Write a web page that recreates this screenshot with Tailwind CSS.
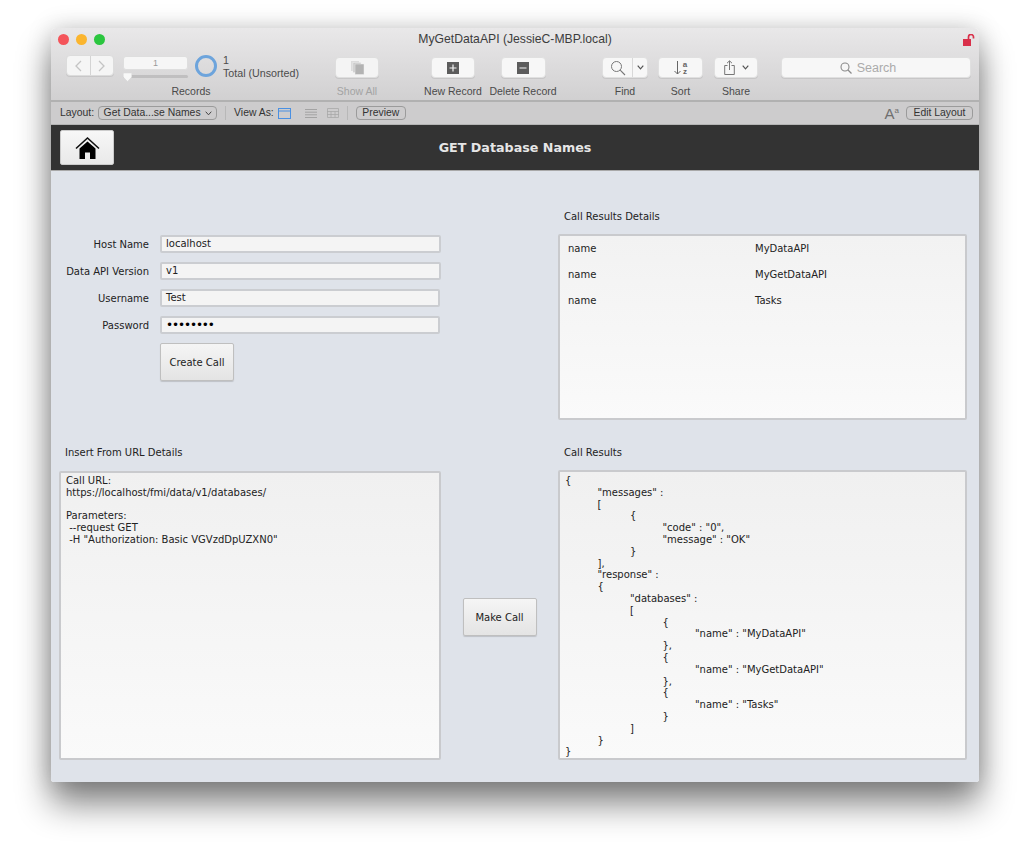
<!DOCTYPE html>
<html lang="en">
<head>
    <meta charset="UTF-8">
    <title>MyGetDataAPI</title>
    <script src="https://cdn.jsdelivr.net/npm/@tailwindcss/browser@4"></script>
</head>
<body class="bg-white overflow-hidden">
<div class="h-[855px] pt-[28px] pl-[51px]">
    <!-- Window -->
    <div class="w-[928px] h-[754px] rounded-t-[5px] rounded-b-[3px] flex flex-col overflow-hidden shadow-[0_22px_34px_rgba(0,0,0,0.48),0_0_24px_rgba(0,0,0,0.18)] font-['Liberation_Sans',sans-serif]">

        <!-- Title bar + toolbar -->
        <div class="h-[74px] shrink-0 bg-gradient-to-b from-[#e9e8e9] to-[#d1d0d1] border-b-2 border-[#b1b1b1] text-[#4a4a4a]">
            <div class="h-[23px] flex items-center pl-[7px] pr-[3px]">
                <span class="w-[11px] h-[11px] rounded-full bg-[#f4545a]"></span>
                <span class="w-[11px] h-[11px] rounded-full bg-[#fbb52e] ml-[7px]"></span>
                <span class="w-[11px] h-[11px] rounded-full bg-[#2bc63f] ml-[7px]"></span>
                <span class="flex-1 text-center text-[12.2px] text-[#3d3d3d] pr-[38px]">MyGetDataAPI (JessieC-MBP.local)</span>
                <svg class="w-[13px] h-[12px]" viewBox="0 0 13 12"><rect x="0" y="5" width="8" height="7" fill="#d9304a"/><path d="M5.500 5V3a2.500 2.500 0 0 1 5 0v1.500" fill="none" stroke="#d9304a" stroke-width="1.700"/></svg>
            </div>
            <div class="flex pl-[15px] pt-[4px]">
                <!-- Records -->
                <div class="w-[250px] h-[45px] flex flex-col">
                    <div class="h-[32px] flex">
                        <div class="w-[48px] h-[21px] rounded-[4px] bg-[#f5f5f5] border border-[#dcdcdc] shadow-[0_1px_0_rgba(0,0,0,0.08)] flex">
                            <span class="flex-1 border-r border-[#d4d4d4] flex items-center justify-center">
                                <svg class="w-[9px] h-[12px]" viewBox="0 0 9 12"><path d="M7 1 2 6l5 5" fill="none" stroke="#c4c4c4" stroke-width="1.300"/></svg>
                            </span>
                            <span class="flex-1 flex items-center justify-center">
                                <svg class="w-[9px] h-[12px]" viewBox="0 0 9 12"><path d="M2 1l5 5-5 5" fill="none" stroke="#c4c4c4" stroke-width="1.300"/></svg>
                            </span>
                        </div>
                        <div class="w-[65px] ml-[9px]">
                            <div class="h-[14px] mt-[1px] rounded-[3px] bg-[#f6f6f6] border border-[#dedede] text-[9px] leading-[12px] text-center text-[#9a9a9a]">1</div>
                            <div class="relative h-[3px] mt-[5px] rounded-full bg-[#c0bfc0]">
                                <svg class="absolute left-0 -top-[2px] w-[9px] h-[9px]" viewBox="0 0 9 9"><path d="M1 0h7a1 1 0 0 1 .8.3v3.700L4.500 8.500.2 4V.8A1 1 0 0 1 1 0z" fill="#f8f8f8" stroke="#cfcfcf" stroke-width=".4"/></svg>
                            </div>
                        </div>
                        <div class="w-[22px] h-[22px] ml-[7px] rounded-full border-[3px] border-[#6da4dc]"></div>
                        <div class="ml-[6px] text-[10.700px] leading-[12.500px] -mt-[1px] text-[#4b4b4b]">
                            <div>1</div>
                            <div class="whitespace-nowrap">Total (Unsorted)</div>
                        </div>
                    </div>
                    <div class="text-[10.500px] text-center mt-[1px]">Records</div>
                </div>
                <!-- Show All -->
                <div class="w-[60px] ml-[11px] flex flex-col items-center">
                    <div class="w-[44px] h-[21px] mt-[2px] rounded-[4px] bg-[#f4f4f4] border border-[#dedede] shadow-[0_1px_0_rgba(0,0,0,0.08)] flex items-center justify-center">
                        <svg class="w-[15px] h-[15px]" viewBox="0 0 15 15"><rect x="1" y="1" width="8" height="10" fill="#dcdcdc"/><rect x="3" y="2.500" width="8" height="10" fill="#c9c9c9" stroke="#eee" stroke-width=".5"/><rect x="5" y="4" width="9" height="10.500" fill="#b3b3b3" stroke="#eee" stroke-width=".5"/></svg>
                    </div>
                    <div class="text-[10.500px] mt-[6px] text-[#a3a3a3] whitespace-nowrap">Show All</div>
                </div>
                <!-- New Record -->
                <div class="w-[70px] ml-[31px] flex flex-col items-center">
                    <div class="w-[44px] h-[21px] mt-[2px] rounded-[4px] bg-[#f7f7f7] border border-[#e0e0e0] shadow-[0_1px_0_rgba(0,0,0,0.08)] flex items-center justify-center">
                        <svg class="w-[12px] h-[12px]" viewBox="0 0 12 12"><rect width="12" height="12" fill="#5c5c5c"/><path d="M6 2.500v7M2.500 6h7" stroke="#f4f4f4" stroke-width="1.200"/></svg>
                    </div>
                    <div class="text-[10.500px] mt-[6px] whitespace-nowrap">New Record</div>
                </div>
                <!-- Delete Record -->
                <div class="w-[70px] flex flex-col items-center">
                    <div class="w-[45px] h-[21px] mt-[2px] rounded-[4px] bg-[#f7f7f7] border border-[#e0e0e0] shadow-[0_1px_0_rgba(0,0,0,0.08)] flex items-center justify-center">
                        <svg class="w-[12px] h-[12px]" viewBox="0 0 12 12"><rect width="12" height="12" fill="#5c5c5c"/><path d="M2.500 6h7" stroke="#f4f4f4" stroke-width="1.200"/></svg>
                    </div>
                    <div class="text-[10.500px] mt-[6px] whitespace-nowrap">Delete Record</div>
                </div>
                <!-- Find -->
                <div class="w-[46px] ml-[44px] flex flex-col items-center">
                    <div class="w-[46px] h-[21px] mt-[2px] rounded-[4px] bg-[#f7f7f7] border border-[#e0e0e0] shadow-[0_1px_0_rgba(0,0,0,0.08)] flex">
                        <span class="w-[30px] border-r border-[#d8d8d8] flex items-center justify-center">
                            <svg class="w-[16px] h-[16px]" viewBox="0 0 16 16"><circle cx="6.500" cy="6.500" r="5" fill="none" stroke="#777" stroke-width="1"/><path d="M10.200 10.200 15 15" stroke="#777" stroke-width="1.100"/></svg>
                        </span>
                        <span class="flex-1 flex items-center justify-center">
                            <svg class="w-[7px] h-[5px]" viewBox="0 0 7 5"><path d="M.7.700 3.500 3.800 6.300.7" fill="none" stroke="#555" stroke-width="1.200"/></svg>
                        </span>
                    </div>
                    <div class="text-[10.500px] mt-[6px]">Find</div>
                </div>
                <!-- Sort -->
                <div class="w-[45px] ml-[10px] flex flex-col items-center">
                    <div class="w-[45px] h-[21px] mt-[2px] rounded-[4px] bg-[#f7f7f7] border border-[#e0e0e0] shadow-[0_1px_0_rgba(0,0,0,0.08)] flex items-center justify-center">
                        <svg class="w-[7px] h-[14px]" viewBox="0 0 7 14"><path d="M3.500 0v13M.5 10l3 3 3-3" fill="none" stroke="#666" stroke-width="1"/></svg>
                        <span class="ml-[2px] text-[8px] leading-[7px] font-bold text-[#666] flex flex-col items-center"><span>a</span><span>z</span></span>
                    </div>
                    <div class="text-[10.500px] mt-[6px]">Sort</div>
                </div>
                <!-- Share -->
                <div class="w-[44px] ml-[11px] flex flex-col items-center">
                    <div class="w-[44px] h-[21px] mt-[2px] rounded-[4px] bg-[#f7f7f7] border border-[#e0e0e0] shadow-[0_1px_0_rgba(0,0,0,0.08)] flex items-center justify-center gap-[7px]">
                        <svg class="w-[11px] h-[15px]" viewBox="0 0 11 15"><path d="M3.500 5.500H.7v9h9.600v-9H7.500M5.500 10V1M3 3.200 5.500.8 8 3.200" fill="none" stroke="#777" stroke-width="1"/></svg>
                        <svg class="w-[7px] h-[5px]" viewBox="0 0 7 5"><path d="M.7.700 3.500 3.800 6.300.7" fill="none" stroke="#555" stroke-width="1.200"/></svg>
                    </div>
                    <div class="text-[10.500px] mt-[6px]">Share</div>
                </div>
                <!-- Search -->
                <div class="w-[190px] h-[21px] ml-[23px] mt-[2px] pr-[16px] pt-[1px] rounded-[4px] bg-[#f7f7f7] border border-[#e0e0e0] shadow-[0_1px_0_rgba(0,0,0,0.08)] flex items-center justify-center gap-[5px] text-[12.500px] text-[#ababab]">
                    <svg class="w-[12px] h-[12px]" viewBox="0 0 12 12"><circle cx="5" cy="5" r="4" fill="none" stroke="#8a8a8a" stroke-width="1.100"/><path d="M8 8l3.500 3.500" stroke="#8a8a8a" stroke-width="1.200"/></svg>
                    <span>Search</span>
                </div>
            </div>
        </div>

        <!-- Layout bar -->
        <div class="h-[23px] shrink-0 bg-[#cdcccd] flex items-center pl-[9px] pr-[6px] text-[10.400px] text-[#333] border-b border-[#b4b4b4]">
            <span>Layout:</span>
            <span class="w-[119px] h-[14px] ml-[4px] rounded-[4px] border border-[#9b9b9b] flex items-center justify-center gap-[4px] whitespace-nowrap">
                Get Data...se Names
                <svg class="w-[7px] h-[5px]" viewBox="0 0 7 5"><path d="M.7.700 3.500 3.800 6.300.7" fill="none" stroke="#444" stroke-width="1"/></svg>
            </span>
            <span class="w-px h-[14px] bg-[#b8b8b8] ml-[8px]"></span>
            <span class="ml-[8px] whitespace-nowrap">View As:</span>
            <svg class="w-[13px] h-[11px] ml-[4px]" viewBox="0 0 13 11"><rect x=".5" y=".5" width="12" height="10" fill="none" stroke="#4a90e2"/><path d="M0 3h13" stroke="#4a90e2" stroke-width="1"/></svg>
            <svg class="w-[12px] h-[9px] ml-[14px]" viewBox="0 0 12 9"><path d="M0 .5h12M0 3.200h12M0 5.800h12M0 8.500h12" stroke="#a3a3a3"/></svg>
            <svg class="w-[12px] h-[10px] ml-[10px]" viewBox="0 0 12 10"><path d="M.5.5h11v9H.500zM0 3.500h12M0 6.500h12M4 3.500v6M8 3.500v6" fill="none" stroke="#a8a8a8" stroke-width=".8"/></svg>
            <span class="w-px h-[14px] bg-[#b8b8b8] ml-[8px]"></span>
            <span class="w-[50px] h-[14px] ml-[8px] rounded-[4px] border border-[#9b9b9b] flex items-center justify-center">Preview</span>
            <span class="flex-1"></span>
            <span class="text-[#6f6f6f] text-[15px] leading-none">A<sup class="text-[8px] top-[-6px]">a</sup></span>
            <span class="w-[67px] h-[14px] ml-[7px] rounded-[4px] border border-[#9b9b9b] flex items-center justify-center whitespace-nowrap">Edit Layout</span>
        </div>

        <!-- Header band -->
        <div class="h-[46px] shrink-0 bg-[#333333] flex items-center pl-[9px] pr-[63px] border-b border-[#a9a9a9] font-['DejaVu_Sans',sans-serif]">
            <div class="w-[54px] h-[35px] rounded-[2px] bg-gradient-to-b from-[#f7f7f7] to-[#e9e9e9] border border-[#cccccc] flex items-center justify-center">
                <svg class="w-[25px] h-[24px]" viewBox="0 0 25 24"><path d="M1 12.500 12.500 2 24 12.500" fill="none" stroke="#111" stroke-width="1.600"/><path d="M12.500 5.500 4.500 12.500V23H10v-6.500h5V23h5.500V12.500z" fill="#000"/></svg>
            </div>
            <h1 class="flex-1 text-center text-[12.700px] font-bold text-[#e6e6e6]">GET Database Names</h1>
        </div>

        <!-- Body -->
        <div class="flex-1 bg-[#dfe3ea] flex pl-[9px] font-['DejaVu_Sans',sans-serif] text-[10px] text-[#222]">
            <!-- Left column -->
            <div class="w-[381px] flex flex-col">
                <div class="mt-[64px] w-[380px] flex flex-col gap-[9px]">
                    <div class="flex items-center h-[18px]">
                        <label class="w-[89px] text-right whitespace-nowrap">Host Name</label>
                        <div class="w-[281px] h-[18px] ml-[11px] px-[4px] rounded-[2px] border-2 border-[#cbcdd1] bg-[#f4f4f4] leading-[14px] -mr-[2px]">localhost</div>
                    </div>
                    <div class="flex items-center h-[18px]">
                        <label class="w-[89px] text-right whitespace-nowrap">Data API Version</label>
                        <div class="w-[281px] h-[18px] ml-[11px] px-[4px] rounded-[2px] border-2 border-[#cbcdd1] bg-[#f4f4f4] leading-[14px] -mr-[2px]">v1</div>
                    </div>
                    <div class="flex items-center h-[18px]">
                        <label class="w-[89px] text-right whitespace-nowrap">Username</label>
                        <div class="w-[280px] h-[18px] ml-[11px] px-[4px] rounded-[2px] border-2 border-[#cbcdd1] bg-[#f4f4f4] leading-[14px]">Test</div>
                    </div>
                    <div class="flex items-center h-[18px]">
                        <label class="w-[89px] text-right whitespace-nowrap">Password</label>
                        <div class="w-[280px] h-[18px] ml-[11px] px-[4px] rounded-[2px] border-2 border-[#cbcdd1] bg-[#f4f4f4] leading-[14px] text-black text-[12px] tracking-[-1.100px]">••••••••</div>
                    </div>
                </div>
                <button class="w-[74px] h-[38px] ml-[100px] mt-[9px] rounded-[2px] border border-[#bfbfbf] bg-gradient-to-b from-[#f5f5f5] to-[#e4e4e4] shadow-[0_1px_1px_rgba(0,0,0,0.15)]">Create Call</button>
                <div class="mt-[66px] ml-[5px] leading-[12px]">Insert From URL Details</div>
                <div class="-ml-[1px] mt-[12px] h-[289px] rounded-[2px] border-2 border-[#c9cacd] bg-gradient-to-b from-[#f0f0f0] to-[#fafafa] pl-[5px] pt-[2px] leading-[11.800px] whitespace-pre">Call URL:
https://localhost/fmi/data/v1/databases/

Parameters:
 --request GET
 -H "Authorization: Basic VGVzdDpUZXN0"</div>
            </div>
            <!-- Middle column -->
            <div class="w-[118px] flex justify-center">
                <button class="w-[74px] h-[38px] mt-[427px] -ml-[1px] rounded-[2px] border border-[#bfbfbf] bg-gradient-to-b from-[#f5f5f5] to-[#e4e4e4] shadow-[0_1px_1px_rgba(0,0,0,0.15)]">Make Call</button>
            </div>
            <!-- Right column -->
            <div class="w-[408px] flex flex-col">
                <div class="mt-[40px] ml-[5px] leading-[12px]">Call Results Details</div>
                <div class="-ml-[1px] mt-[11px] h-[186px] rounded-[2px] border-2 border-[#c9cacd] bg-gradient-to-b from-[#f2f2f2] to-[#fafafa] pl-[8px] pt-[6px]">
                    <div class="h-[26px] flex leading-[13px]"><span class="w-[187px]">name</span><span>MyDataAPI</span></div>
                    <div class="h-[26px] flex leading-[13px]"><span class="w-[187px]">name</span><span>MyGetDataAPI</span></div>
                    <div class="h-[26px] flex leading-[13px]"><span class="w-[187px]">name</span><span>Tasks</span></div>
                </div>
                <div class="mt-[27px] ml-[5px] leading-[12px]">Call Results</div>
                <pre class="-ml-[1px] mt-[11px] h-[290px] rounded-[2px] border-2 border-[#c9cacd] bg-gradient-to-b from-[#f0f0f0] to-[#fafafa] pl-[5px] pt-[3px] leading-[11.800px] [tab-size:32.5px] font-['DejaVu_Sans',sans-serif] overflow-hidden">{
	"messages" :
	[
		{
			"code" : "0",
			"message" : "OK"
		}
	],
	"response" :
	{
		"databases" :
		[
			{
				"name" : "MyDataAPI"
			},
			{
				"name" : "MyGetDataAPI"
			},
			{
				"name" : "Tasks"
			}
		]
	}
}</pre>
            </div>
        </div>
    </div>
</div>
</body>
</html>
